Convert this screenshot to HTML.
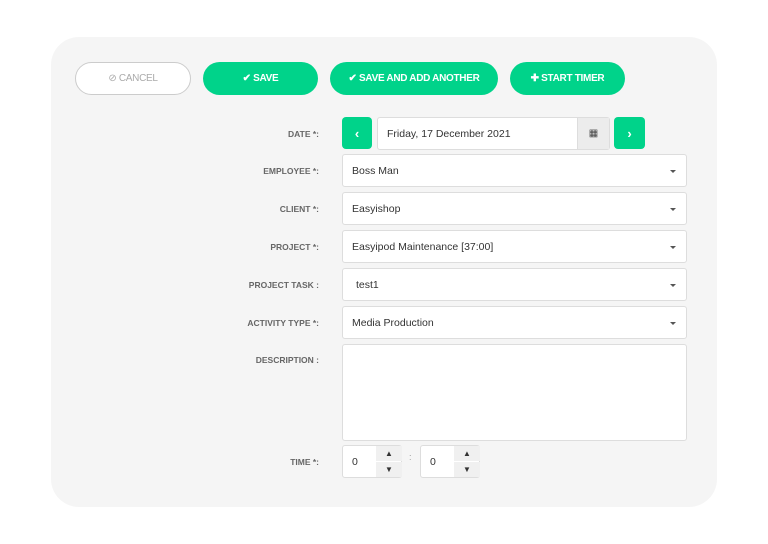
<!DOCTYPE html>
<html><head><style>
body{margin:0;width:768px;height:544px;background:#fff;font-family:"Liberation Sans",sans-serif;position:relative;overflow:hidden}
.card{position:absolute;left:51px;top:37px;width:666px;height:470px;background:#f5f5f5;border-radius:28px}
.a{position:absolute;box-sizing:border-box}
.btn{background:#00d38a;color:#fff;border-radius:17px;font-size:10px;font-weight:bold;display:flex;align-items:center;justify-content:center;height:33px;top:62px;letter-spacing:-0.3px}
.cancel{background:#fff;border:1px solid #ccc;color:#aaa;font-weight:normal}
.lbl{font-size:8.5px;font-weight:bold;color:#666;right:449px;text-align:right;white-space:nowrap}
.in{background:#fff;border:1px solid #ddd;border-radius:3px;left:342px;width:345px;height:33px;font-size:10.5px;color:#333;padding-left:9px;display:flex;align-items:center}
.car{position:absolute;right:10px;top:15px;border:3px solid transparent;border-top:3px solid #555;border-bottom:0}
.gb{background:#00d38a;border-radius:4px;color:#fff;font-weight:bold;font-size:13px;display:flex;align-items:center;justify-content:center}
.sp{background:#fff;border:1px solid #ddd;border-radius:3px;height:33px;width:60px;top:445px;font-size:10.5px;color:#333}
.sp span{position:absolute;left:9px;top:10px}
.sp i{position:absolute;left:33px;width:26px;height:15px;background:#f0f0f0;font-style:normal;font-size:8px;text-align:center;line-height:15px;color:#333;font-weight:bold}
</style></head><body>
<div class="card"></div>
<div class="a btn cancel" style="left:75px;width:116px">⊘ CANCEL</div>
<div class="a btn" style="left:203px;width:115px">✔ SAVE</div>
<div class="a btn" style="left:330px;width:168px">✔ SAVE AND ADD ANOTHER</div>
<div class="a btn" style="left:510px;width:115px">✚ START TIMER</div>

<div class="a lbl" style="top:129px">DATE *:</div>
<div class="a gb" style="left:342px;top:117px;width:30px;height:32px">‹</div>
<div class="a in" style="left:377px;top:117px;width:233px;height:33px">Friday, 17 December 2021</div>
<div class="a" style="left:577px;top:118px;width:32px;height:31px;background:#ececec;border-left:1px solid #ddd;font-size:10px;text-align:center;line-height:31px;color:#444">▦</div>
<div class="a gb" style="left:614px;top:117px;width:31px;height:32px">›</div>

<div class="a lbl" style="top:166px">EMPLOYEE *:</div>
<div class="a in" style="top:154px">Boss Man<b class="car"></b></div>
<div class="a lbl" style="top:204px">CLIENT *:</div>
<div class="a in" style="top:192px">Easyishop<b class="car"></b></div>
<div class="a lbl" style="top:242px">PROJECT *:</div>
<div class="a in" style="top:230px">Easyipod Maintenance [37:00]<b class="car"></b></div>
<div class="a lbl" style="top:280px">PROJECT TASK :</div>
<div class="a in" style="top:268px;padding-left:13px">test1<b class="car"></b></div>
<div class="a lbl" style="top:318px">ACTIVITY TYPE *:</div>
<div class="a in" style="top:306px">Media Production<b class="car"></b></div>
<div class="a lbl" style="top:355px">DESCRIPTION :</div>
<div class="a in" style="top:344px;height:97px"></div>
<div class="a lbl" style="top:457px">TIME *:</div>
<div class="a sp" style="left:342px"><span>0</span><i style="top:0">▲</i><i style="top:16px">▼</i></div>
<div class="a" style="left:409px;top:452px;font-size:9px;color:#999">:</div>
<div class="a sp" style="left:420px"><span>0</span><i style="top:0">▲</i><i style="top:16px">▼</i></div>
</body></html>
